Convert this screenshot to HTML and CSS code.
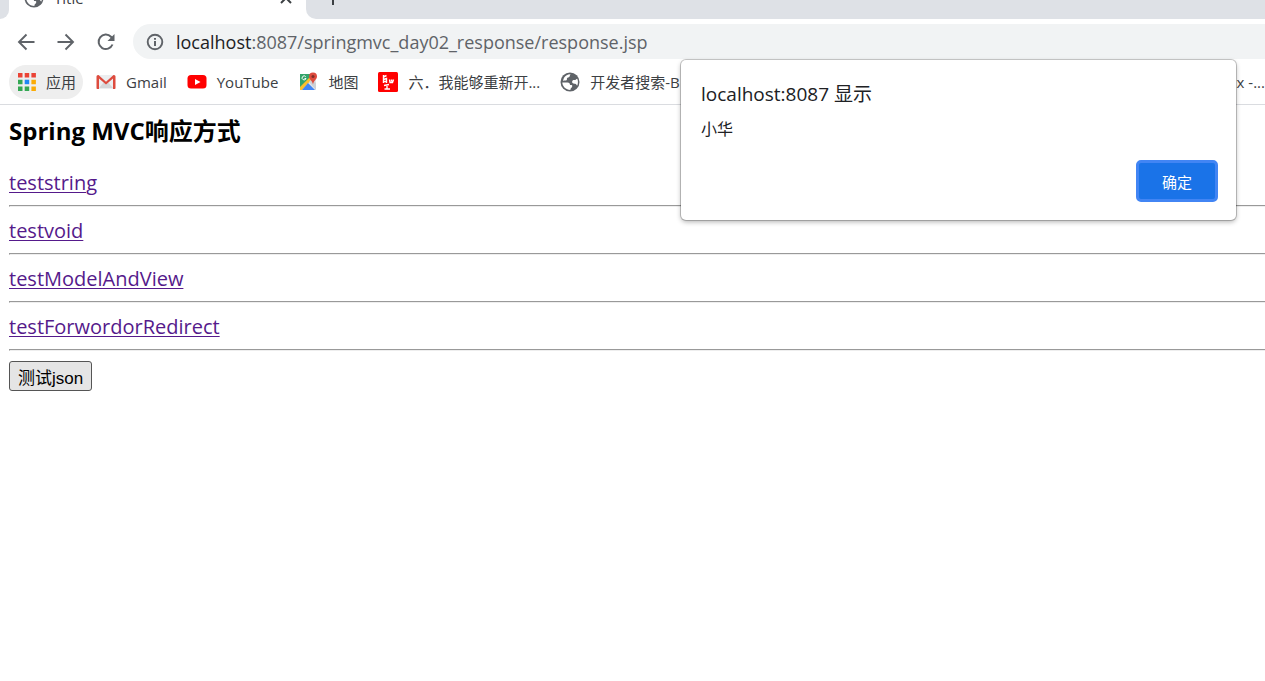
FILE: index.html
```
<!DOCTYPE html>
<html lang="zh-CN">
  <head>
    <meta charset="UTF-8" />
    <meta name="viewport" content="width=device-width, initial-scale=1.0" />
    <title>Title</title>
    <link rel="stylesheet" href="styles.css">
  </head>
  <body>
    <header class="browser">
      <div class="tab-strip">
        <div class="strip-left"></div>
        <div class="tab">
          <svg class="globe" viewBox="0 0 20 20">
            <circle cx="10" cy="10" r="9.500" fill="#5f6368" />
            <path fill="#fff" d="M10.500 2.200c-1 1.400-.4 2.300-1.700 3-.9.500-2 .5-1.900 1.700.2 1-.6 1.500-1.700 1.500l-1.500.1C2.700 10 3 8 4.200 5.600 5.500 3.500 8 2 10.500 2.200zM2.300 10.600h5.200c1.900 0 2.500 1.200 2.500 2.500h1.500c1 .2 1 1.500.2 2.300-.9.700-1.200 1-1.300 2.500-4.600 0-7.900-3.200-8.100-7.300zM17.200 6.800c1 1.800 1 4.800.1 6.700-1-.2-.8-1.700-2.300-1.800-2.200.1-3.300-1-2.800-2.400.5-1.800 2-1.200 3-1.300.9-.1 1-1.100 2-1.200z" />
          </svg>
          <span class="tab-title">Title</span>
          <button type="button" class="icon-button" aria-label="关闭">
            <svg width="12" height="12" viewBox="0 0 12 12"><path d="M1 1l10 10M11 1L1 11" stroke="#3c4043" stroke-width="2" /></svg>
          </button>
        </div>
        <div class="strip-right">
          <button type="button" class="icon-button" aria-label="新标签页">
            <svg width="14" height="14" viewBox="0 0 14 14"><path d="M7 0v14M0 7h14" stroke="#3c4043" stroke-width="2" /></svg>
          </button>
        </div>
      </div>

      <div class="toolbar">
        <button type="button" class="icon-button" aria-label="后退">
          <svg width="20" height="20" viewBox="0 0 20 20"><path d="M18.500 10H3M10.500 2.500L3 10l7.500 7.500" fill="none" stroke="#5f6368" stroke-width="1.900" /></svg>
        </button>
        <button type="button" class="icon-button" aria-label="前进">
          <svg width="20" height="20" viewBox="0 0 20 20"><path d="M1.500 10H17M9.500 2.500L17 10l-7.500 7.500" fill="none" stroke="#5f6368" stroke-width="1.900" /></svg>
        </button>
        <button type="button" class="icon-button" aria-label="重新加载">
          <svg width="20" height="20" viewBox="0 0 20 20"><path d="M16.500 12.500A7.200 7.200 0 1 1 15 4.800l1.500 1.700" fill="none" stroke="#5f6368" stroke-width="2" /><path d="M18.500 2v7h-7z" fill="#5f6368" /></svg>
        </button>
        <div class="address">
          <svg width="18" height="18" viewBox="0 0 18 18"><circle cx="9" cy="9" r="7.300" fill="none" stroke="#5f6368" stroke-width="1.900" /><path d="M9 8v5M9 5v1.800" stroke="#5f6368" stroke-width="2" /></svg>
          <span><span class="host">localhost</span>:8087/springmvc_day02_response/response.jsp</span>
        </div>
      </div>

      <nav class="bookmarks">
        <a class="bookmark apps" href="#">
          <svg width="18" height="18" viewBox="0 0 18 18">
            <path fill="#ea4335" d="M0 0h4.500v4.500H0zM6.700 0h4.500v4.500H6.700zM13.400 0h4.500v4.500h-4.500z" />
            <path fill="#34a853" d="M0 6.700h4.500v4.500H0zM0 13.400h4.500v4.500H0zM6.700 13.400h4.500v4.500H6.700z" />
            <path fill="#1e88f5" d="M6.700 6.700h4.500v4.500H6.700z" />
            <path fill="#fbab05" d="M13.400 6.700h4.500v4.500h-4.500zM13.400 13.400h4.500v4.500h-4.500z" />
          </svg>
          应用
        </a>
        <a class="bookmark" href="#">
          <svg width="20" height="20" viewBox="0 0 20 20">
            <path fill="#eceef0" d="M2 3h16v14H2z" />
            <path fill="#d5d7d9" d="M3 16l5-6 2 2 2-2 5 6z" />
            <path fill="#dd4b3e" d="M.500 4.500C.500 3.500 1.500 3 2.500 3L10 9.700 17.500 3c1 0 2 .5 2 1.500V16c0 .6-.4 1-1 1H17V6.500l-7 6-7-6V17H1.500c-.6 0-1-.4-1-1z" />
          </svg>
          Gmail
        </a>
        <a class="bookmark" href="#">
          <svg width="20" height="20" viewBox="0 0 20 20"><rect x=".500" y="3" width="19" height="13.500" rx="3.500" fill="#f00" /><path d="M8 7l5.500 3L8 13z" fill="#fff" /></svg>
          YouTube
        </a>
        <a class="bookmark" href="#">
          <svg width="20" height="20" viewBox="0 0 20 20">
            <path fill="#e4e7ea" d="M2 2h16v16H2z" />
            <path fill="#34a46a" d="M2 2h11v5L2 17z" />
            <path fill="#fbc02d" d="M2 15L13 4l2 2L4 18H2z" />
            <path fill="#4285f4" d="M4 18l6-7 7 7z" />
            <path fill="#cdd1d5" d="M11 10l3-3 4 4v7z" />
            <path d="M7.700 4.700a2 2 0 1 0 .3 1.800H6.500" fill="none" stroke="#fff" stroke-width="1" />
            <path fill="#dd4b3e" d="M15 .500a4 4 0 0 1 4 4c0 3-3.500 4-4 8-.5-4-4-5-4-8a4 4 0 0 1 4-4z" />
            <circle cx="15" cy="4.500" r="1.500" fill="#802d27" />
          </svg>
          地图
        </a>
        <a class="bookmark" href="#">
          <svg width="20" height="20" viewBox="0 0 20 20">
            <rect width="20" height="20" rx="1.500" fill="#f00" />
            <path d="M5.500 3v8M5.500 5l3-1.500M5.500 7.500l3-1v4.500M6 9.500h2.500M11.500 7.500l.5 3h2.500l1-3M13.500 7.500v2M6 13.500l5-1M9 13v3.500M6.500 17h5.500" fill="none" stroke="#fff" stroke-width="1.400" />
          </svg>
          六．我能够重新开...
        </a>
        <a class="bookmark" href="#">
          <svg class="globe" viewBox="0 0 20 20">
            <circle cx="10" cy="10" r="9.500" fill="#5f6368" />
            <path fill="#fff" d="M10.500 2.200c-1 1.400-.4 2.300-1.700 3-.9.500-2 .5-1.900 1.700.2 1-.6 1.500-1.700 1.500l-1.500.1C2.700 10 3 8 4.200 5.600 5.500 3.500 8 2 10.500 2.200zM2.300 10.600h5.200c1.900 0 2.500 1.200 2.500 2.500h1.500c1 .2 1 1.500.2 2.300-.9.700-1.200 1-1.300 2.500-4.600 0-7.900-3.200-8.100-7.300zM17.200 6.800c1 1.800 1 4.800.1 6.700-1-.2-.8-1.700-2.300-1.800-2.200.1-3.300-1-2.800-2.400.5-1.800 2-1.200 3-1.300.9-.1 1-1.100 2-1.200z" />
          </svg>
          开发者搜索-B
        </a>
        <a class="bookmark last" href="#">x -...</a>
      </nav>
    </header>

    <main class="page">
      <h3>Spring MVC响应方式</h3>
      <a href="#">teststring</a>
      <hr>
      <a href="#">testvoid</a>
      <hr>
      <a href="#">testModelAndView</a>
      <hr>
      <a href="#">testForwordorRedirect</a>
      <hr>
      <button type="button" class="json-button">测试json</button>
    </main>

    <div class="dialog" role="alertdialog" aria-labelledby="dialog-title" aria-describedby="dialog-message">
      <h2 id="dialog-title">localhost:8087 显示</h2>
      <p id="dialog-message">小华</p>
      <button type="button" class="ok-button">确定</button>
    </div>
  </body>
</html>
```
FILE: styles.css
```
* {
  box-sizing: border-box;
}
body {
  margin: 0;
  background-color: #fff;
  color: #000;
  font-family: "Open Sans", "Noto Sans CJK SC", sans-serif;
}
svg {
  display: block;
  flex-shrink: 0;
}
.globe {
  width: 20px;
  height: 20px;
}
.icon-button {
  display: flex;
  padding: 0;
  border: none;
  background: none;
}

/* Tab strip */
.tab-strip {
  display: flex;
  align-items: flex-end;
  height: 19px;
  overflow: hidden;
}
.strip-left,
.strip-right {
  height: 42px;
  background-color: #dee1e6;
}
.strip-left {
  width: 9px;
  border-radius: 0 0 10px 0;
}
.strip-right {
  flex: 1;
  display: flex;
  align-items: center;
  padding-left: 20px;
  border-radius: 0 0 0 10px;
}
.tab {
  display: flex;
  align-items: center;
  gap: 10px;
  width: 297px;
  height: 42px;
  padding: 0 14px 0 15px;
}
.tab-title {
  flex: 1;
  font-size: 15px;
  color: #3c4043;
}

/* Toolbar */
.toolbar {
  display: flex;
  align-items: center;
  gap: 20px;
  height: 40px;
  padding: 5px 0 0 16px;
}
.address {
  flex: 1;
  display: flex;
  align-items: center;
  gap: 12px;
  height: 35px;
  margin-left: -3px;
  padding-left: 13px;
  border-radius: 18px 0 0 18px;
  background-color: #f1f3f4;
  font-size: 18px;
  color: #5f6368;
  white-space: nowrap;
}
.host {
  color: #202124;
}

/* Bookmarks */
.bookmarks {
  display: flex;
  align-items: center;
  gap: 20px;
  height: 46px;
  padding-left: 9px;
  border-bottom: 1px solid #dadce0;
}
.bookmark {
  display: flex;
  align-items: center;
  gap: 10px;
  height: 34px;
  font-size: 15px;
  color: #3c4043;
  text-decoration: none;
  white-space: nowrap;
}
.apps {
  margin-right: -7px;
  padding: 0 7px 0 9px;
  border-radius: 17px;
  background-color: #eee;
}
.last {
  margin-left: auto;
}

/* Page */
.page {
  padding: 8px 0 0 9px;
  font-size: 20px;
  line-height: 28px;
}
.page h3 {
  margin: 0 0 20px;
  font-size: 24px;
  line-height: 36px;
}
.page a {
  color: #551a8b;
  text-decoration-thickness: 1px;
  text-underline-offset: 2px;
}
.page hr {
  margin: 8px 0 10px;
  border: 1px solid #999;
  border-right: none;
  border-bottom-color: #eee;
}
.json-button {
  display: block;
  height: 30px;
  padding: 0 8px;
  border: 1px solid #555;
  border-radius: 3px;
  background-color: #e5e5e5;
  color: #000;
  font-family: "Liberation Sans", "Noto Sans CJK SC", sans-serif;
  font-size: 17px;
}

/* Alert dialog */
.dialog {
  position: absolute;
  top: 60px;
  right: 29px;
  display: flex;
  flex-direction: column;
  width: 555px;
  padding: 20px 18px 18px 20px;
  border-radius: 5px;
  background-color: #fff;
  box-shadow: 0 0 0 1px rgba(0, 0, 0, 0.2), 0 2px 5px rgba(0, 0, 0, 0.3);
  color: #202124;
}
.dialog h2 {
  margin: 0;
  font-size: 19px;
  font-weight: normal;
  line-height: 28px;
}
.dialog p {
  margin: 10px 0 20px;
  font-size: 16px;
  line-height: 22px;
}
.ok-button {
  align-self: flex-end;
  width: 82px;
  height: 42px;
  border: 3px solid #4285f4;
  border-radius: 5px;
  background-color: #1a73e8;
  color: #fff;
  font-family: inherit;
  font-size: 15px;
}
```
